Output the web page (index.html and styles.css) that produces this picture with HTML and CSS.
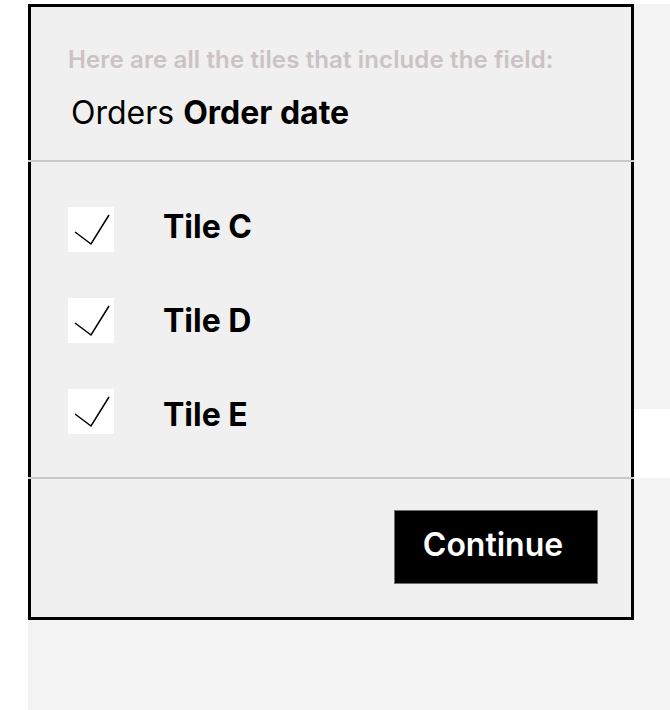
FILE: index.html
```html
<!DOCTYPE html>
<html lang="en">
<head>
<meta charset="utf-8">
<title>Tiles with field</title>
<link rel="stylesheet" href="styles.css">
</head>
<body>
<div class="stage">
  <div class="bg bg-top"></div>
  <div class="bg bg-bottom"></div>
  <div class="dialog">
    <div class="header">
      <p class="intro">Here are all the tiles that include the field:</p>
      <p class="field">Orders <strong>Order date</strong></p>
    </div>
    <div class="divider"></div>
    <ul class="tiles">
      <li class="tile">
        <span class="check"><svg viewBox="0 0 46 45" width="46" height="45"><polyline points="7,25 23,37 41,8" fill="none" stroke="#000" stroke-width="1.5"/></svg></span>
        <span class="tile-name">Tile C</span>
      </li>
      <li class="tile">
        <span class="check"><svg viewBox="0 0 46 45" width="46" height="45"><polyline points="7,25 23,37 41,8" fill="none" stroke="#000" stroke-width="1.5"/></svg></span>
        <span class="tile-name">Tile D</span>
      </li>
      <li class="tile">
        <span class="check"><svg viewBox="0 0 46 45" width="46" height="45"><polyline points="7,25 23,37 41,8" fill="none" stroke="#000" stroke-width="1.5"/></svg></span>
        <span class="tile-name">Tile E</span>
      </li>
    </ul>
    <div class="divider"></div>
    <div class="footer">
      <button class="continue" type="button">Continue</button>
    </div>
  </div>
</div>
</body>
</html>
```

FILE: styles.css
```css
* { box-sizing: border-box; }
html, body { margin: 0; padding: 0; background: #fff; }
body { font-family: Inter, "Noto Sans", "Liberation Sans", sans-serif; color: #000; }

.stage { position: relative; height: 710px; overflow: hidden; }

.bg { margin-left: 28px; background: #f3f3f3; }
.bg-top { margin-top: 4px; height: 405px; }
.bg-bottom { margin-top: 69px; height: 232px; }

.dialog {
  position: absolute;
  left: 28px;
  top: 4px;
  width: 606px;
  height: 616px;
  border: 3px solid #000;
  background: #f0f0f0;
  display: flex;
  flex-direction: column;
}

.header { padding: 39px 37px 28px; }
.intro {
  margin: 0;
  font-size: 24px;
  line-height: 28px;
  font-weight: 600;
  letter-spacing: 0.13px;
  color: #cbc3c3;
}
.field {
  margin: 20px 0 0 3px;
  font-size: 32px;
  line-height: 38px;
  font-weight: 400;
}
.field strong { font-weight: 700; }

.divider { height: 2px; margin: 0 -3px; background: #c9c9c9; }

.tiles {
  list-style: none;
  margin: 0;
  padding: 45px 37px 43px;
  display: flex;
  flex-direction: column;
  gap: 46px;
}
.tile { display: flex; align-items: center; height: 45px; }
.check { width: 46px; height: 45px; background: #fff; display: block; flex: none; }
.check svg { display: block; }
.tile-name {
  margin-left: 49px;
  font-size: 32px;
  font-weight: 700;
  line-height: 45px;
}
.tile:first-child .tile-name { padding-bottom: 6px; }
.tile:last-child .tile-name { padding-top: 5px; }

.footer {
  flex: 1;
  display: flex;
  justify-content: flex-end;
  align-items: flex-start;
  padding: 31px 33px 0 0;
}
.continue {
  width: 204px;
  height: 74px;
  background: #000;
  color: #fff;
  border: 1px solid #6f6f6f;
  font-family: Inter, "Noto Sans", "Liberation Sans", sans-serif;
  font-size: 32px;
  font-weight: 600;
  padding: 0 6px 6px 0;
  margin: 0;
}
```
